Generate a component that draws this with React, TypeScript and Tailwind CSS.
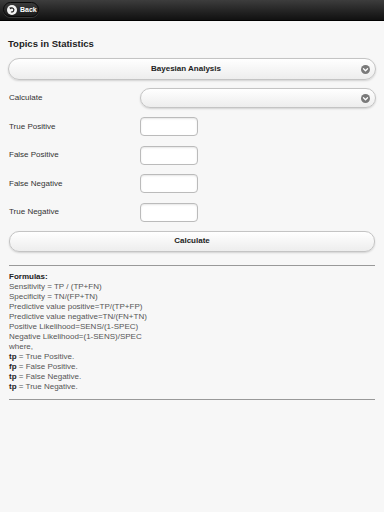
import React from 'react'

function DownIcon() {
  return (
    <svg width="9" height="9" viewBox="0 0 18 18" className="shrink-0">
      <circle cx="9" cy="9" r="9" fill="#7a7a7a" />
      <path d="M5 7.5 L9 11.5 L13 7.5" stroke="#fff" strokeWidth="2.6" fill="none" strokeLinecap="round" strokeLinejoin="round" />
    </svg>
  )
}

function BackIcon() {
  return (
    <svg width="10" height="10" viewBox="0 0 20 20" className="shrink-0">
      <circle cx="10" cy="10" r="10" fill="#f2f2f2" />
      <path d="M7 7 A4 4 0 1 1 8 13.5" stroke="#111" strokeWidth="2.2" fill="none" />
      <path d="M4.5 5 L8.5 5 L7 9 Z" fill="#111" />
    </svg>
  )
}

const rows = ['True Positive', 'False Positive', 'False Negative', 'True Negative']

const formulas = [
  'Sensitivity = TP / (TP+FN)',
  'Specificity = TN/(FP+TN)',
  'Predictive value positive=TP/(TP+FP)',
  'Predictive value negative=TN/(FN+TN)',
  'Positive Likelihood=SENS/(1-SPEC)',
  'Negative Likelihood=(1-SENS)/SPEC',
  'where,',
]

const defs = [
  ['tp', 'True Positive.'],
  ['fp', 'False Positive.'],
  ['tp', 'False Negative.'],
  ['tp', 'True Negative.'],
]

export default function App() {
  return (
    <div
      className="w-[384px] h-[512px] bg-[#f7f7f7] text-[#333] overflow-hidden"
      style={{ fontFamily: '"Liberation Sans", Arial, sans-serif' }}
    >
      <div className="h-[21px] bg-gradient-to-b from-[#3d3d3d] to-[#111] border-b border-[#000] flex items-start pl-[3px] pt-[2px]">
        <div className="h-[15px] w-[36px] rounded-full bg-gradient-to-b from-[#3a3a3a] to-[#1c1c1c] border border-[#0a0a0a] shadow-[0_1px_0_rgba(255,255,255,0.15)] flex items-center gap-[3px] pl-[3px]">
          <BackIcon />
          <span className="text-[7px] font-bold text-white leading-none">Back</span>
        </div>
      </div>

      <div className="px-[8px]">
        <div className="pt-[17px] text-[9.5px] font-bold text-[#222] leading-[12px]">Topics in Statistics</div>

        <div className="mt-[8px] h-[22px] rounded-[11px] border border-[#c4c4c4] bg-gradient-to-b from-white to-[#ededed] shadow-[0_1px_2px_rgba(0,0,0,0.15)] flex items-center pl-[2px] pr-[5px]">
          <span className="flex-1 text-center text-[8px] font-bold text-[#222]">Bayesian Analysis</span>
          <DownIcon />
        </div>

        <div className="mt-[8px] flex items-center h-[20px]">
          <span className="w-[132px] pl-[1px] text-[8px]">Calculate</span>
          <div className="flex-1 h-[20px] rounded-[10px] border border-[#c4c4c4] bg-gradient-to-b from-white to-[#ededed] shadow-[0_1px_2px_rgba(0,0,0,0.15)] flex items-center justify-end pr-[5px]">
            <DownIcon />
          </div>
        </div>

        <div className="mt-[9px] flex flex-col gap-[9.5px]">
          {rows.map((r) => (
            <div key={r} className="flex items-center h-[19px]">
              <span className="w-[132px] pl-[1px] text-[8px]">{r}</span>
              <div className="w-[58px] h-[19px] rounded-[4px] border border-[#bbb] bg-white shadow-[inset_0_1px_2px_rgba(0,0,0,0.1)]" />
            </div>
          ))}
        </div>

        <div className="mt-[9px] mx-[1px] h-[21px] rounded-[10px] border border-[#c4c4c4] bg-gradient-to-b from-white to-[#ededed] shadow-[0_1px_2px_rgba(0,0,0,0.15)] flex items-center justify-center">
          <span className="text-[8px] font-bold text-[#222]">Calculate</span>
        </div>

        <div className="mt-[13px] mx-[1px] border-t border-[#999]" />

        <div className="pt-[6px] pl-[1px] text-[8px] leading-[10px] text-[#555]">
          <div className="font-bold text-[#222]">Formulas:</div>
          {formulas.map((f) => (
            <div key={f}>{f}</div>
          ))}
          {defs.map(([a, b], i) => (
            <div key={i}>
              <span className="font-bold text-[#222]">{a}</span> = {b}
            </div>
          ))}
        </div>

        <div className="mt-[7px] mx-[1px] border-t border-[#999]" />
      </div>
    </div>
  )
}
